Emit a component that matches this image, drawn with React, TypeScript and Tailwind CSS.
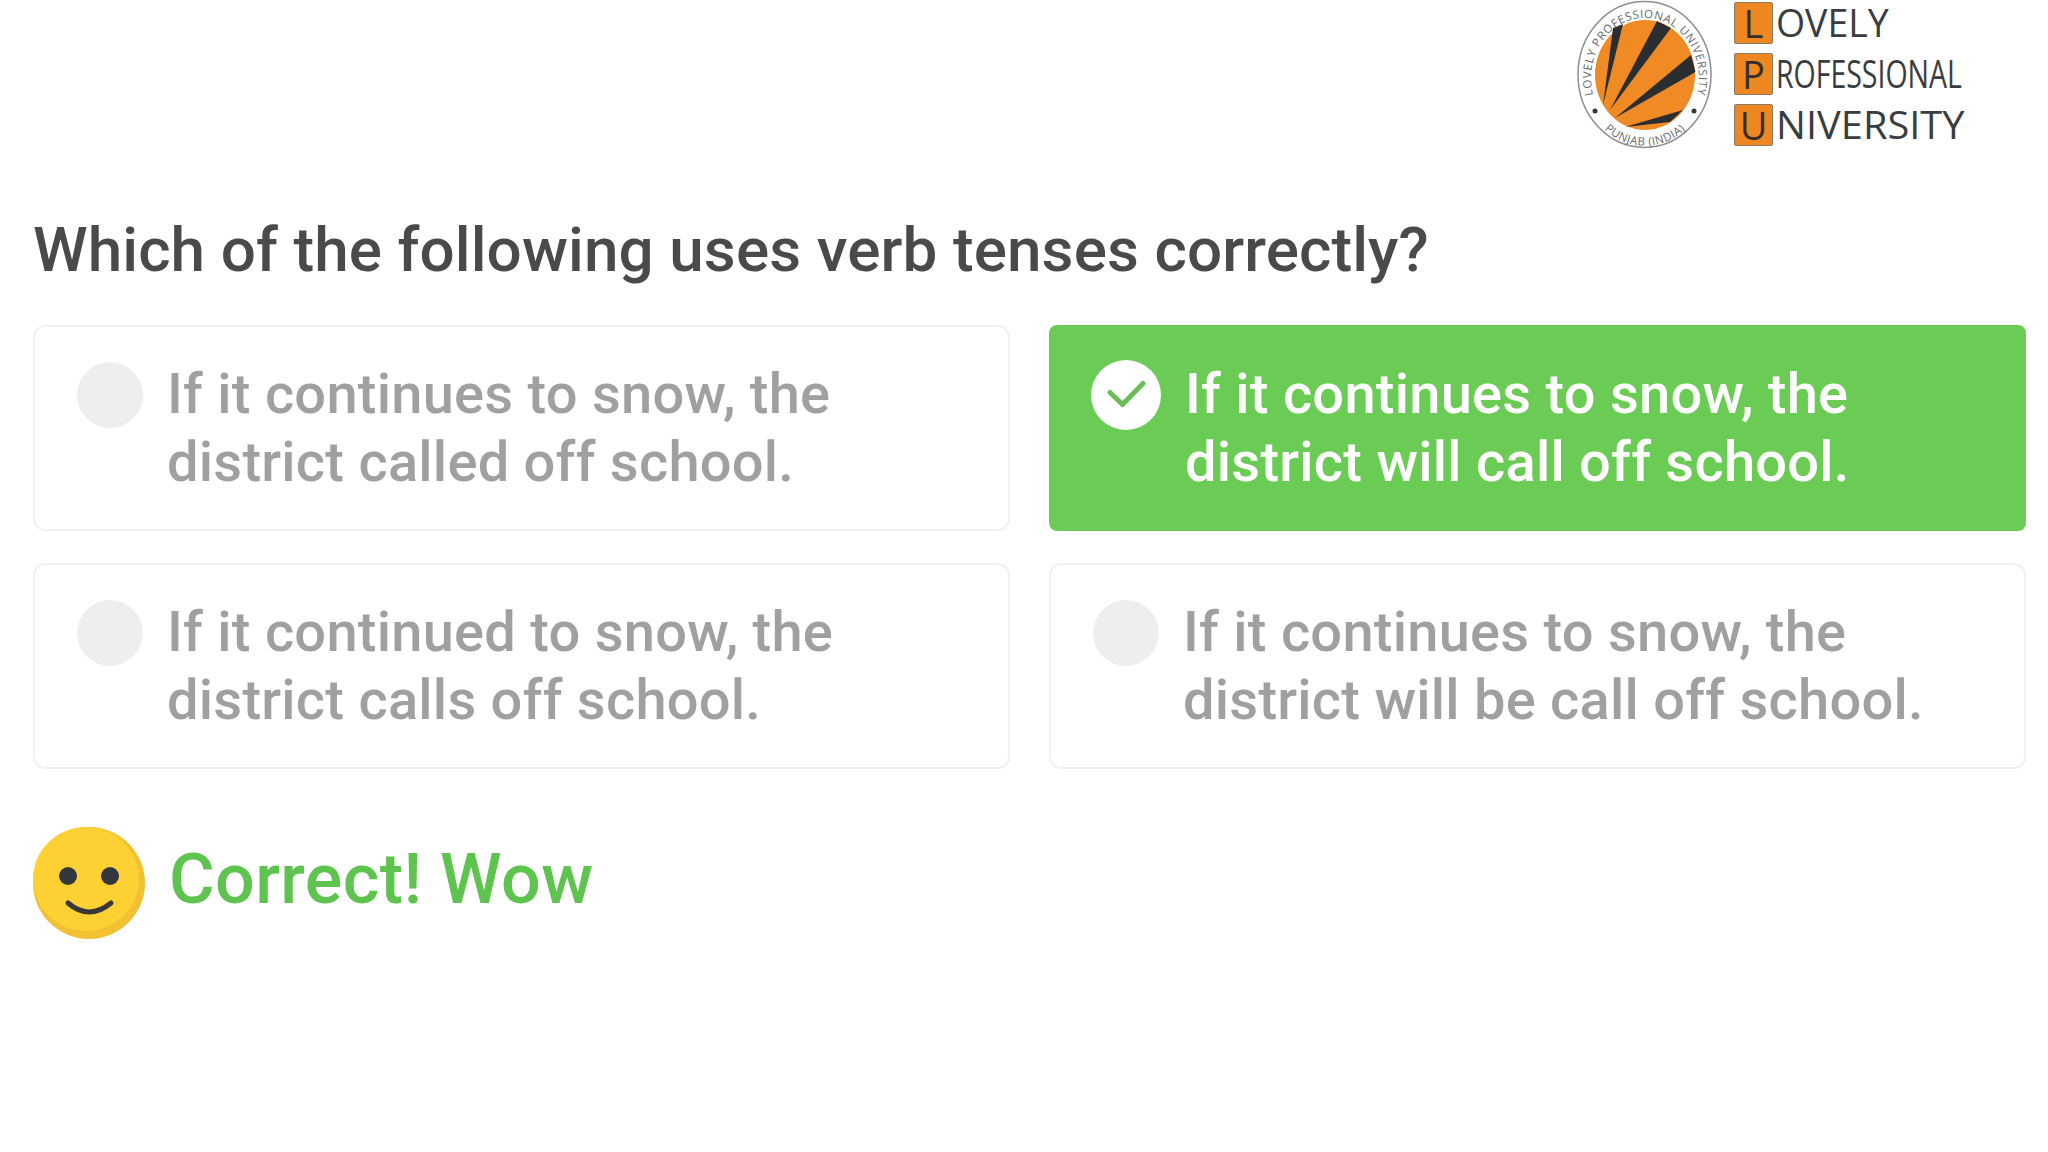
const options = [
  { text: ["If it continues to snow, the", "district called off school."], correct: false },
  { text: ["If it continues to snow, the", "district will call off school."], correct: true },
  { text: ["If it continued to snow, the", "district calls off school."], correct: false },
  { text: ["If it continues to snow, the", "district will be call off school."], correct: false },
];

function Seal() {
  return (
    <svg width="140" height="150" viewBox="0 0 140 150" className="shrink-0">
      <defs>
        <path id="sealTop" d="M 17.8 100 A 54 60 0 1 1 118.2 100" />
        <path id="sealBottom" d="M 19 120 A 63 69 0 0 0 117 120" />
      </defs>
      <ellipse cx="67.5" cy="74.5" rx="66.5" ry="73" fill="white" stroke="#8b8d8f" strokeWidth="1.5" />
      <ellipse cx="68" cy="75" rx="50" ry="55" fill="#f08a24" />
      <g fill="#2b2e31">
        <polygon points="26,105 36,28 46,24" />
        <polygon points="33,110 80,21 94,28" />
        <polygon points="38,118 114,55 118.5,72" />
        <polygon points="48,127 106,110 93,122" />
      </g>
      <text fill="#66696c" fontSize="11.5" fontFamily="'Open Sans', sans-serif" letterSpacing="0.7" textAnchor="middle">
        <textPath href="#sealTop" startOffset="50%">LOVELY PROFESSIONAL UNIVERSITY</textPath>
      </text>
      <text fill="#66696c" fontSize="11.5" fontFamily="'Open Sans', sans-serif" letterSpacing="0.5" textAnchor="middle">
        <textPath href="#sealBottom" startOffset="50%">PUNJAB (INDIA)</textPath>
      </text>
      <circle cx="18" cy="111" r="2.5" fill="#33363a" />
      <circle cx="117" cy="111" r="2.5" fill="#33363a" />
    </svg>
  );
}

function LogoRow({ letter, rest, scale }: { letter: string; rest: string; scale: string }) {
  return (
    <div className="flex items-center h-[42px]">
      <div className="w-[39px] h-[42px] shrink-0 bg-[#ee8722] border border-[#8a7a68] rounded-[2px] text-center text-[38px] leading-[40px] text-[#33302c] font-['Open_Sans',sans-serif]">
        {letter}
      </div>
      <div className={`ml-[3px] -mt-[3px] text-[39px] leading-[42px] text-[#3a3d40] font-['Open_Sans',sans-serif] whitespace-nowrap origin-left ${scale}`}>
        {rest}
      </div>
    </div>
  );
}

function Smiley() {
  return (
    <svg width="112" height="112" viewBox="0 0 112 112" className="shrink-0">
      <circle cx="56" cy="56" r="56" fill="#f2c033" />
      <ellipse cx="53" cy="52" rx="53" ry="52" fill="#fdd034" />
      <ellipse cx="35" cy="49" rx="9" ry="9" fill="#34363d" />
      <ellipse cx="77" cy="49" rx="9" ry="9" fill="#34363d" />
      <path d="M 35 76 Q 56 94 78 76" fill="none" stroke="#38373a" strokeWidth="5" strokeLinecap="round" />
    </svg>
  );
}

function OptionCard({ text, correct }: { text: string[]; correct: boolean }) {
  return (
    <div
      className={
        correct
          ? "flex h-[206px] rounded-lg bg-[#6bcc55] pl-[42px] pt-[36px] text-white"
          : "flex h-[206px] rounded-xl bg-white border-2 border-[#f1f1f1] pl-[42px] pt-[34px] text-[#a0a0a0]"
      }
    >
      {correct ? (
        <div className="w-[70px] h-[70px] -mt-[1px] rounded-full bg-white flex items-center justify-center shrink-0">
          <svg width="40" height="30" viewBox="0 0 40 30" fill="none">
            <path d="M 4 12.5 L 16.5 24.5 L 37 3.5" stroke="#6bbd5a" strokeWidth="5" strokeLinecap="round" strokeLinejoin="round" />
          </svg>
        </div>
      ) : (
        <div className="w-[66px] h-[66px] mt-[1px] rounded-full bg-[#eeeeee] shrink-0" />
      )}
      <div className="ml-[24px] -mt-[1px] text-[56px] leading-[68px] tracking-[0.25px] font-medium whitespace-nowrap">
        {text.map((line) => (
          <div key={line}>{line}</div>
        ))}
      </div>
    </div>
  );
}

export default function App() {
  return (
    <div className="w-[2048px] h-[1152px] bg-white overflow-hidden font-['Roboto',sans-serif]">
      {/* logo */}
      <div className="flex justify-end h-[150px] pr-[83px]">
        <Seal />
        <div className="ml-[17px] w-[231px] pt-[2px] flex flex-col gap-[9px]">
          <LogoRow letter="L" rest="OVELY" scale="scale-x-[0.96]" />
          <LogoRow letter="P" rest="ROFESSIONAL" scale="scale-x-[0.73]" />
          <LogoRow letter="U" rest="NIVERSITY" scale="scale-x-[1.02]" />
        </div>
      </div>

      <div className="px-[33px] pr-[22px]">
        <h1 className="mt-[64px] text-[62px] leading-[72px] tracking-[0.1px] font-medium text-[#4a4a4a] whitespace-nowrap">
          Which of the following uses verb tenses correctly?
        </h1>

        <div className="mt-[39px] grid grid-cols-2 gap-x-[39px] gap-y-[32px]">
          {options.map((o) => (
            <OptionCard key={o.text[1]} text={o.text} correct={o.correct} />
          ))}
        </div>

        <div className="mt-[58px] flex items-center gap-[24px]">
          <Smiley />
          <div className="text-[70px] leading-[84px] tracking-[0.4px] font-medium text-[#5fc44f] -mt-[8px]">Correct! Wow</div>
        </div>
      </div>
    </div>
  );
}
